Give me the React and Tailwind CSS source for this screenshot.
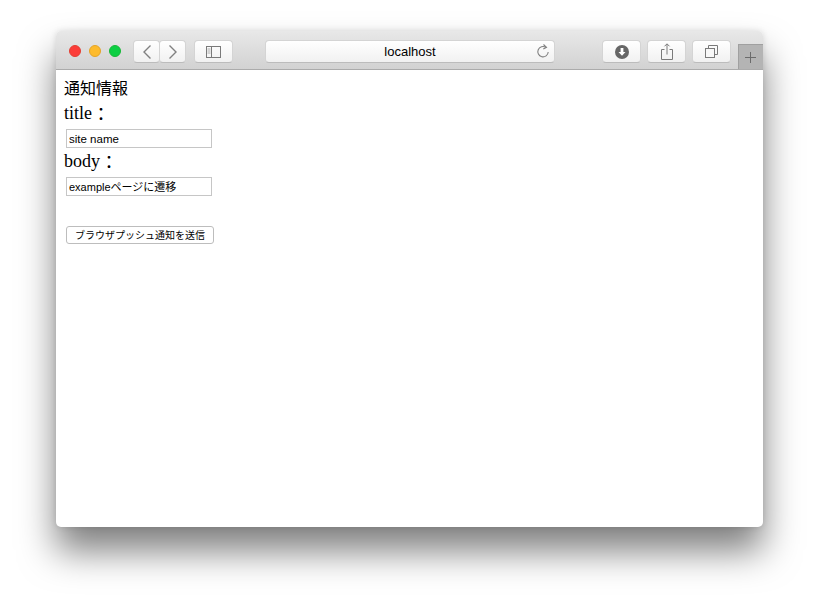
const BTN = 'h-[23px] bg-gradient-to-b from-[#ffffff] to-[#f1f1f1] border border-[#d4d4d4] border-b-[#bcbcbc] rounded-[4px] flex items-center justify-center shrink-0'

function Back() {
  return (
    <svg width="10" height="16" viewBox="0 0 10 16" fill="none" stroke="#808080" strokeWidth="1.4">
      <path d="M8.500 1.500 2 8l6.500 6.500" />
    </svg>
  )
}

function Forward() {
  return (
    <svg width="10" height="16" viewBox="0 0 10 16" fill="none" stroke="#808080" strokeWidth="1.4">
      <path d="M1.500 1.500 8 8l-6.500 6.500" />
    </svg>
  )
}

function Sidebar() {
  return (
    <svg width="15" height="12" viewBox="0 0 15 12" fill="none" stroke="#7a7a7a">
      <rect x="0.5" y="0.5" width="14" height="11" />
      <path d="M5.500 0.500v11" />
      <path d="M1.500 3h3M1.500 5h3M1.500 7h3" strokeWidth="0.8" stroke="#999999" />
    </svg>
  )
}

function Reload() {
  return (
    <svg width="14" height="15" viewBox="0 0 14 15" fill="none" stroke="#808080" strokeWidth="1.1">
      <path d="M9.800 3.300A5.200 5.200 0 1 0 12.200 8" />
      <path d="M7.500 0.500l3 2.800-3.200 1.800" />
    </svg>
  )
}

function Download() {
  return (
    <svg width="14" height="14" viewBox="0 0 14 14">
      <circle cx="7" cy="7" r="7" fill="#666666" />
      <path d="M5.600 3h2.800v4h2.100L7 10.800 3.500 7h2.100z" fill="#ffffff" />
    </svg>
  )
}

function Share() {
  return (
    <svg width="12" height="17" viewBox="0 0 12 17" fill="none" stroke="#7a7a7a">
      <path d="M3.500 6.500h-3v10h11v-10h-3" />
      <path d="M6 11.500V1M3.500 3.300 6 0.800l2.500 2.500" />
    </svg>
  )
}

function Tabs() {
  return (
    <svg width="13" height="13" viewBox="0 0 13 13" fill="none" stroke="#7a7a7a">
      <rect x="0.500" y="3.500" width="9" height="9" fill="#f8f8f8" />
      <path d="M3.500 3.500v-3h9v9h-3" />
    </svg>
  )
}

export default function App() {
  return (
    <div className="w-[819px] h-[607px] bg-white pt-[31px] pl-[56px] overflow-hidden">
      <div className="w-[707px] h-[496px] bg-white rounded-[5px] overflow-hidden flex flex-col shadow-[0_24px_36px_rgba(0,0,0,0.5),0_0_6px_rgba(0,0,0,0.12)]">
        <div className="h-[39px] shrink-0 bg-gradient-to-b from-[#e8e8e8] to-[#d2d2d2] border-b border-[#ababab] flex items-start relative">
          <div className="flex gap-2 pl-[13px] pt-[14px] shrink-0">
            <span className="w-3 h-3 rounded-full bg-[#fc3d39] border border-[#e33e32]" />
            <span className="w-3 h-3 rounded-full bg-[#fdbb2d] border border-[#e5a426]" />
            <span className="w-3 h-3 rounded-full bg-[#0ccf43] border border-[#17b838]" />
          </div>
          <div className="flex ml-[12px] mt-[9px]">
            <div className={`${BTN} w-[27px]`}><Back /></div>
            <div className={`${BTN} w-[27px] -ml-px`}><Forward /></div>
          </div>
          <div className={`${BTN} w-[39px] ml-2 mt-[9px]`}><Sidebar /></div>
          <div className={`${BTN} w-[290px] ml-8 mt-[9px] relative`}>
            <span className="text-[13px] text-black font-['Liberation_Sans',sans-serif]">localhost</span>
            <span className="absolute right-[4px] top-[3px] flex"><Reload /></span>
          </div>
          <div className={`${BTN} w-[39px] ml-[47px] mt-[9px]`}><Download /></div>
          <div className={`${BTN} w-[39px] ml-[6px] mt-[9px]`}><Share /></div>
          <div className={`${BTN} w-[39px] ml-[6px] mt-[9px]`}><Tabs /></div>
          <div className="w-[25px] h-[25px] ml-[7px] mt-[13px] bg-[#b4b4b4] border-l border-t border-[#a0a0a0] flex items-center justify-center pr-[2px]">
            <svg width="11" height="11" viewBox="0 0 11 11" stroke="#6b6b6b">
              <path d="M5.500 0v11M0 5.500h11" />
            </svg>
          </div>
        </div>
        <div className="pl-2 pt-[7px] flex-1 text-black text-base leading-[24px] font-['Liberation_Serif','Noto_Sans_CJK_JP',serif]">
          <div>通知情報</div>
          <div className="text-[18px]">title<span className="inline-block translate-y-[2px]">：</span></div>
          <div className="h-[24px] pl-[2px] pt-[4px]">
            <input
              defaultValue="site name"
              className="block w-[146px] h-[19px] border border-[#c6c6c6] px-[2px] text-[11.5px] text-black outline-none font-['Liberation_Sans','Noto_Sans_CJK_JP',sans-serif]"
            />
          </div>
          <div className="text-[18px]">body<span className="inline-block translate-y-[2px]">：</span></div>
          <div className="h-[24px] pl-[2px] pt-[4px]">
            <input
              defaultValue="exampleページに遷移"
              className="block w-[146px] h-[19px] border border-[#c6c6c6] px-[2px] text-[11px] text-black outline-none font-['Liberation_Sans','Noto_Sans_CJK_JP',sans-serif]"
            />
          </div>
          <div className="pl-[2px] pt-[29px]">
            <button className="block w-[148px] h-[18px] bg-white border border-[#bdbdbd] rounded-[3px] text-[10px] leading-none text-black font-['Noto_Sans_CJK_JP',sans-serif]">
              ブラウザプッシュ通知を送信
            </button>
          </div>
        </div>
      </div>
    </div>
  )
}
